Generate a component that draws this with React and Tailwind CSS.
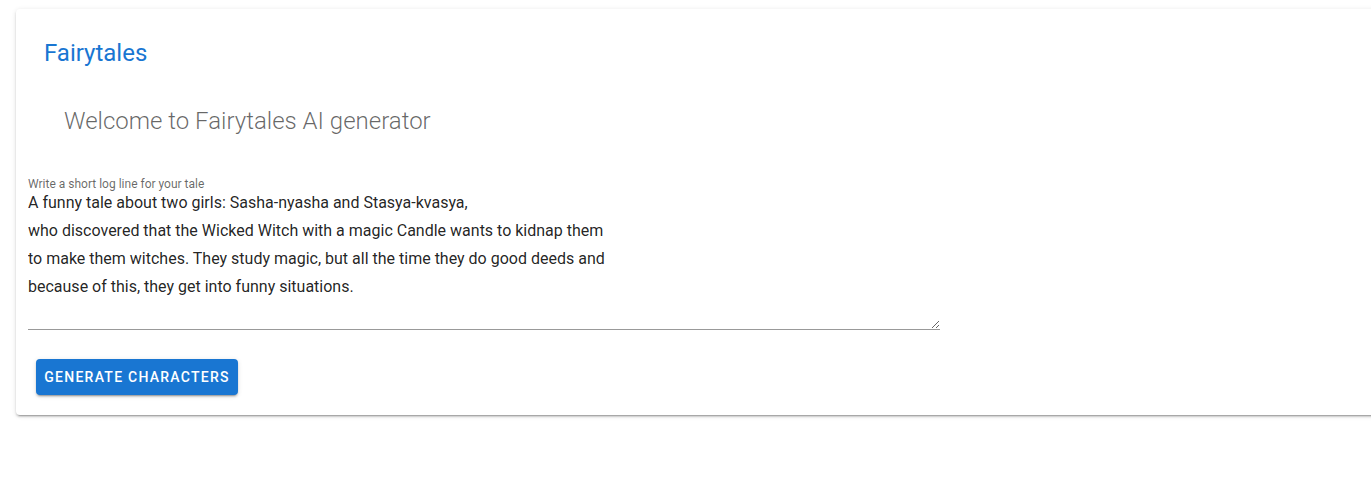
import { useState } from 'react';

const tale = `A funny tale about two girls: Sasha-nyasha and Stasya-kvasya,
who discovered that the Wicked Witch with a magic Candle wants to kidnap them
to make them witches. They study magic, but all the time they do good deeds and
because of this, they get into funny situations.`;

export default function App() {
    const [text, setText] = useState(tale);

    return (
        <div className="w-[1371px] h-[490px] overflow-hidden bg-white font-['Roboto',sans-serif]">
            <div className="ml-4 mt-[9px] w-[1400px] rounded bg-white pt-[28px] pb-[20px] shadow-[0_3px_1px_-2px_rgba(0,0,0,0.2),0_2px_2px_0_rgba(0,0,0,0.14),0_1px_5px_0_rgba(0,0,0,0.12)]">
                <h1 className="pl-7 text-[24px] leading-[32px] font-normal text-[#1976d2]">Fairytales</h1>

                <h2 className="mt-[36px] pl-12 text-[24px] leading-[32px] font-light text-black/60">
                    Welcome to Fairytales AI generator
                </h2>

                <div className="mt-[41px] pl-3">
                    <label className="block text-[12px] leading-[13px] text-black/60">
                        Write a short log line for your tale
                    </label>
                    <textarea
                        value={text}
                        onChange={(e) => setText(e.target.value)}
                        className="block -mt-[2px] w-[912px] h-[141px] border-b border-black/40 bg-transparent p-0 text-[16px] leading-[28px] text-black/[0.87] outline-none resize-y"
                    />
                </div>

                <div className="mt-[29px] pl-5">
                    <button className="h-9 w-[202px] rounded bg-[#1976d2] text-white text-[14px] font-medium uppercase tracking-[1.25px] shadow-[0_3px_1px_-2px_rgba(0,0,0,0.2),0_2px_2px_0_rgba(0,0,0,0.14),0_1px_5px_0_rgba(0,0,0,0.12)]">
                        Generate characters
                    </button>
                </div>
            </div>
        </div>
    );
}
